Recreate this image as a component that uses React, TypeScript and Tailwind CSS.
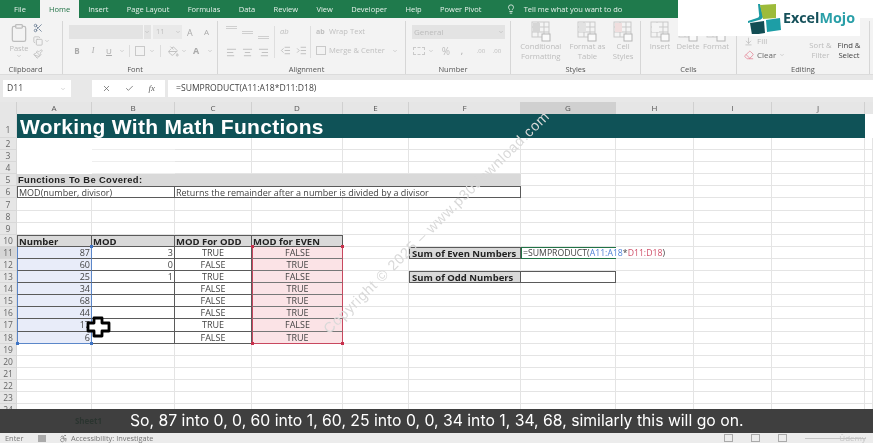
import type { ReactNode } from "react"
import {
  Accessibility,
  AlignCenter,
  AlignLeft,
  AlignRight,
  ArrowDownToLine,
  Check,
  ChevronDown,
  Clipboard,
  Copy,
  Eraser,
  Indent,
  Lightbulb,
  Outdent,
  PaintBucket,
  Paintbrush,
  Scissors,
  X,
} from "lucide-react"

const TABS = ["Insert", "Page Layout", "Formulas", "Data", "Review", "View", "Developer", "Help", "Power Pivot"]
const COLS = ["A", "B", "C", "D", "E", "F", "G", "H", "I", "J"]
const DATA: [number, string, string, string][] = [
  [87, "3", "TRUE", "FALSE"],
  [60, "0", "FALSE", "TRUE"],
  [25, "1", "TRUE", "FALSE"],
  [34, "", "FALSE", "TRUE"],
  [68, "", "FALSE", "TRUE"],
  [44, "", "FALSE", "TRUE"],
  [17, "", "TRUE", "FALSE"],
  [6, "", "FALSE", "TRUE"],
]

const GRID = "border-r border-b border-[#e4e4e4]"
const DARK = "border-r border-b border-[#5a5a5a]"

function Blank({ count }: { count: number }) {
  return (
    <>
      {Array.from({ length: count }, (_, i) => (
        <div key={i} className={GRID} />
      ))}
    </>
  )
}

function Caret() {
  return <ChevronDown size={6} strokeWidth={2} className="text-[#b0b0b0]" />
}

function Handle({ className }: { className: string }) {
  return <span className={`absolute h-[3px] w-[3px] ${className}`} />
}

function TableIcon({ accent }: { accent: string }) {
  return (
    <svg width="20" height="21" viewBox="0 0 20 21" fill="none" stroke="#c9c9c9" strokeWidth="1">
      <rect x="1" y="1" width="17" height="15" fill="#f4f4f4" />
      <path d="M1 6h17M1 11h17M7 1v15M13 1v15" />
      <rect x="2" y="2" width="7" height="9" fill={accent} stroke="none" />
      <rect x="11" y="13" width="8" height="7" fill="#fafafa" stroke="#b5b5b5" />
    </svg>
  )
}

function BigButton({ lines, accent, width }: { lines: string[]; accent: string; width: string }) {
  return (
    <div className={`flex flex-col items-center text-[7.7px] leading-[9.5px] text-[#bcbcbc] ${width}`}>
      <div className="h-[21px]">
        <TableIcon accent={accent} />
      </div>
      {lines.map((l) => (
        <span key={l} className="whitespace-nowrap">
          {l}
        </span>
      ))}
    </div>
  )
}

function Group({ label, width, pad, children }: { label: string; width: string; pad?: string; children: ReactNode }) {
  return (
    <div className={`flex shrink-0 flex-col border-r border-[#d6d6d6] ${width}`}>
      <div className="h-[44px] overflow-hidden">{children}</div>
      <div className={`text-center text-[7.5px] leading-[9px] text-[#555] ${pad ?? ""}`}>{label}</div>
    </div>
  )
}

function Ribbon() {
  const ico = "text-[#bdbdbd]"
  return (
    <div className="flex h-[56px] bg-[#f3f3f3] pt-[3px]">
      <Group label="Clipboard" width="w-[63px]" pad="pr-[11px]">
        <div className="flex gap-[4px] pl-[9px] pt-[2px]">
          <div className="flex flex-col items-center text-[7.5px] text-[#bcbcbc]">
            <Clipboard size={20} strokeWidth={1.5} className={ico} />
            <span className="mt-[1px] leading-[9px]">Paste</span>
            <Caret />
          </div>
          <div className="flex flex-col gap-[3px]">
            <Scissors size={10} className="text-[#6d7f95]" />
            <div className="flex items-center gap-[1px]">
              <Copy size={10} className={ico} />
              <Caret />
            </div>
            <Paintbrush size={10} className={ico} />
          </div>
        </div>
      </Group>
      <Group label="Font" width="w-[155px]" pad="pr-[10px]">
        <div className="flex flex-col gap-[5px] pl-[6px] pt-[4px]">
          <div className="flex items-center">
            <div className="flex h-[14px] w-[82px] justify-end bg-[#e3e3e3]">
              <div className="flex w-[8px] items-center border-l border-[#f5f5f5]">
                <Caret />
              </div>
            </div>
            <div className="ml-[2px] flex h-[14px] w-[29px] items-center justify-between bg-[#e9e9e9] pl-[3px] pr-[1px] text-[7.5px] text-[#c0c0c0]">
              11
              <Caret />
            </div>
            <span className="ml-[5px] w-[17px] text-[9px] leading-none text-[#aaa]">A</span>
            <span className="text-[8px] leading-none text-[#aaa]">A</span>
          </div>
          <div className="flex items-center text-center text-[8px] leading-[14px] text-[#aaa]">
            <b className="w-[16px]">B</b>
            <i className="w-[16px] font-['Liberation_Serif',serif]">I</i>
            <u className="w-[16px]">U</u>
            <div className="flex w-[10px] justify-center">
              <Caret />
            </div>
            <div className="flex w-[4px] justify-center">
              <div className="h-[12px] w-px bg-[#dcdcdc]" />
            </div>
            <div className="flex w-[18px] justify-center">
              <div className="h-[10px] w-[10px] border border-[#c9c9c9]" />
            </div>
            <div className="flex w-[6px] justify-center">
              <Caret />
            </div>
            <div className="flex w-[10px] justify-center">
              <div className="h-[12px] w-px bg-[#dcdcdc]" />
            </div>
            <div className="flex w-[16px] justify-center">
              <PaintBucket size={11} className={ico} />
            </div>
            <div className="flex w-[6px] justify-center">
              <Caret />
            </div>
            <b className="w-[18px] text-[9px]">A</b>
            <div className="flex w-[10px] justify-center">
              <Caret />
            </div>
          </div>
        </div>
      </Group>
      <Group label="Alignment" width="w-[188px]" pad="pr-[10px]">
        <div className="flex pl-[8px] pt-[5px] text-[7.6px] text-[#c0c0c0]">
          <div className="grid w-[49px] grid-cols-3 gap-x-[5px] gap-y-[8px] border-r border-[#dedede] pr-[5px]">
            <div className="mb-[5px] h-[3px] self-start border-y border-[#cfcfcf]" />
            <div className="my-[5px] h-[3px] self-center border-y border-[#cfcfcf]" />
            <div className="mt-[8px] h-[3px] self-end border-y border-[#cfcfcf]" />
            <AlignLeft size={11} className={ico} />
            <AlignCenter size={11} className={ico} />
            <AlignRight size={11} className={ico} />
          </div>
          <div className="flex w-[36px] flex-col gap-[8px] border-r border-[#dedede] pl-[5px]">
            <span className="h-[11px] leading-[11px] italic">ab</span>
            <div className="flex gap-[5px]">
              <Outdent size={11} className={ico} />
              <Indent size={11} className={ico} />
            </div>
          </div>
          <div className="flex flex-col gap-[8px] pl-[5px] leading-[11px]">
            <div className="flex items-center gap-[3px]">
              <span className="w-[10px] text-[7px] font-bold">ab</span>
              Wrap Text
            </div>
            <div className="flex items-center gap-[3px]">
              <div className="h-[9px] w-[10px] border border-[#c9c9c9]" />
              Merge &amp; Center
              <span className="ml-[4px]">
                <Caret />
              </span>
            </div>
          </div>
        </div>
      </Group>
      <Group label="Number" width="w-[105px]" pad="pr-[10px]">
        <div className="flex flex-col gap-[6px] pl-[6px] pt-[4px] text-[8px] text-[#bcbcbc]">
          <div className="flex h-[14px] w-[93px] items-center justify-between bg-[#e3e3e3] pl-[2px] pr-[1px]">
            General
            <Caret />
          </div>
          <div className="flex items-center pl-[1px] text-center leading-[12px]">
            <div className="h-[8px] w-[12px] border border-dashed border-[#c9c9c9]" />
            <div className="flex w-[12px] justify-center">
              <Caret />
            </div>
            <span className="w-[18px] text-[10px]">%</span>
            <span className="w-[14px] font-bold">,</span>
            <span className="ml-[4px] w-[16px] text-[6px]">.00</span>
            <span className="w-[16px] text-[6px]">.00</span>
          </div>
        </div>
      </Group>
      <Group label="Styles" width="w-[130px]">
        <div className="flex pl-[2px]">
          <BigButton lines={["Conditional", "Formatting"]} accent="#d6d6d6" width="w-[56px]" />
          <BigButton lines={["Format as", "Table"]} accent="#e2e2e2" width="w-[38px]" />
          <BigButton lines={["Cell", "Styles"]} accent="#f0dede" width="w-[34px]" />
        </div>
      </Group>
      <Group label="Cells" width="w-[96px]">
        <div className="flex pl-[5px]">
          <BigButton lines={["Insert"]} accent="#f4f4f4" width="w-[28px]" />
          <BigButton lines={["Delete"]} accent="#f4f4f4" width="w-[28px]" />
          <BigButton lines={["Format"]} accent="#f4f4f4" width="w-[28px]" />
        </div>
      </Group>
      <Group label="Editing" width="w-[133px]">
        <div className="flex pl-[7px] pt-[15px]">
          <div className="flex w-[63px] flex-col gap-[4px] text-[8px] leading-[10px]">
            <div className="flex items-center gap-[4px] text-[#bcbcbc]">
              <ArrowDownToLine size={9} />
              Fill
            </div>
            <div className="flex items-center gap-[3px] text-[#666]">
              <Eraser size={10} className="text-[#e58a9a]" />
              Clear
              <Caret />
            </div>
          </div>
          <div className="flex w-[27px] flex-col items-center pt-[5px] text-[7.7px] leading-[9.5px] text-[#bcbcbc]">
            <span>Sort &amp;</span>
            <span>Filter</span>
          </div>
          <div className="flex w-[30px] flex-col items-center pt-[5px] text-[7.7px] leading-[9.5px] text-[#444]">
            <span>Find &amp;</span>
            <span>Select</span>
          </div>
        </div>
      </Group>
    </div>
  )
}

function Logo() {
  return (
    <div className="absolute left-[678px] top-0 flex h-[36px] w-[182px] items-center bg-white pl-[69px]">
      <svg width="36" height="32" viewBox="0 0 36 32" className="shrink-0">
        <path d="M13 2 L16 14 Q16 17 12 18 L1 21 L1 19 L10 16 Q13 15 12 12 L11 2 Z" fill="#1c9aa3" />
        <path d="M13 3 L29 2 L29 16 L16 17 Z" fill="#9dbb3a" />
        <path d="M3 21 L17 19 L18 31 L5 33 Z" fill="#124d54" />
        <path d="M19 18 L33 16 L34 28 L20 30 Z" fill="#1d9ea6" />
      </svg>
      <span className="font-['Open_Sans',sans-serif] text-[14.3px] font-bold leading-none text-[#15505a]">
        Excel<span className="text-[#2a9fa8]">Mojo</span>
      </span>
    </div>
  )
}

function Sheet() {
  const head = `${DARK} border-t bg-[#d9d9d9] pl-[1px] text-[9.5px] font-bold whitespace-nowrap text-[#222]`
  const sumLabel = `${DARK} border-l border-t bg-[#d9d9d9] pl-[2px] text-[9.5px] font-bold whitespace-nowrap text-[#222]`
  return (
    <div className="relative h-[295px] overflow-hidden bg-white">
      <div className="grid grid-cols-[17px_75px_83px_77px_91px_66px_112px_95px_78px_78px_93px_8px] grid-rows-[24px_repeat(24,12.1px)] text-[9px] leading-[11px] text-[#444]">
        {Array.from({ length: 24 }, (_, i) => {
          const n = i + 1
          return (
            <div key={n} className="contents">
              <div
                className={`flex items-center justify-center border-b border-r border-[#d8d8d8] text-[8.5px] text-[#666] ${
                  n === 11 ? "bg-[#d6d6d6]" : "bg-[#e6e6e6]"
                } ${n === 1 ? "pt-[8px]" : ""}`}
              >
                {n}
              </div>
              {n === 1 && (
                <>
                  <div className="col-span-10 flex items-center bg-[#0f5257] pl-[3px] font-['Liberation_Sans',sans-serif] text-[21px] font-bold tracking-[0.3px] text-white">
                    Working With Math Functions
                  </div>
                  <div />
                </>
              )}
              {n >= 2 && n <= 4 && (
                <>
                  <div />
                  <div className="border-b border-[#eeeeee]" />
                  <Blank count={9} />
                </>
              )}
              {n === 5 && (
                <>
                  <div className="col-span-6 bg-[#d9d9d9] pl-[1px] font-['Liberation_Sans',sans-serif] text-[9.4px] font-bold tracking-[0.35px] text-[#222]">
                    Functions To Be Covered:
                  </div>
                  <Blank count={5} />
                </>
              )}
              {n === 6 && (
                <>
                  <div className={`col-span-2 border-l border-t pl-[1px] ${DARK}`}>MOD(number, divisor)</div>
                  <div className={`col-span-4 border-t pl-[1px] ${DARK}`}>
                    Returns the remainder after a number is divided by a divisor
                  </div>
                  <Blank count={5} />
                </>
              )}
              {(n === 7 || n === 8 || n === 9 || n >= 19) && <Blank count={11} />}
              {n === 10 && (
                <>
                  <div className={`${head} border-l`}>Number</div>
                  <div className={head}>MOD</div>
                  <div className={head}>MOD For ODD</div>
                  <div className={head}>MOD for EVEN</div>
                  <Blank count={7} />
                </>
              )}
              {n >= 11 && n <= 18 && (
                <>
                  <div
                    className={`relative border-x border-b border-x-[#5b87c9] bg-[#e8ecf9] pr-[1px] text-right ${
                      n === 18 ? "border-b-[#5b87c9]" : "border-b-[#5a5a5a]"
                    }`}
                  >
                    {DATA[n - 11][0]}
                    {n === 11 && <Handle className="-right-[2px] -top-[2px] bg-[#3f74c4]" />}
                    {n === 18 && (
                      <>
                        <Handle className="-bottom-[2px] -left-[2px] bg-[#3f74c4]" />
                        <Handle className="-bottom-[2px] -right-[2px] bg-[#3f74c4]" />
                      </>
                    )}
                  </div>
                  <div className={`pr-[1px] text-right ${DARK}`}>{DATA[n - 11][1]}</div>
                  <div className={`text-center ${DARK}`}>{DATA[n - 11][2]}</div>
                  <div
                    className={`relative border-x border-b border-x-[#c8485f] bg-[#fbe3e6] text-center ${
                      n === 18 ? "border-b-[#c8485f]" : "border-b-[#777]"
                    }`}
                  >
                    {DATA[n - 11][3]}
                    {n === 11 && (
                      <>
                        <Handle className="-left-[2px] -top-[2px] bg-[#c8304c]" />
                        <Handle className="-right-[2px] -top-[2px] bg-[#c8304c]" />
                      </>
                    )}
                    {n === 18 && (
                      <>
                        <Handle className="-bottom-[2px] -left-[2px] bg-[#c8304c]" />
                        <Handle className="-bottom-[2px] -right-[2px] bg-[#c8304c]" />
                      </>
                    )}
                  </div>
                  <div className={GRID} />
                  {n === 11 ? (
                    <>
                      <div className={sumLabel}>Sum of Even Numbers</div>
                      <div className="relative z-10 whitespace-nowrap border-y border-l border-[#217346] pl-[1px] text-[8.7px] text-[#444]">
                        =SUMPRODUCT(<span className="text-[#4f81d6]">A11:A18</span>*
                        <span className="text-[#d0506a]">D11:D18</span>)
                      </div>
                    </>
                  ) : n === 13 ? (
                    <>
                      <div className={sumLabel}>Sum of Odd Numbers</div>
                      <div className={`${DARK} border-t`} />
                    </>
                  ) : (
                    <Blank count={2} />
                  )}
                  <Blank count={4} />
                </>
              )}
            </div>
          )
        })}
      </div>

      {/* watermark lies on top of the cells */}
      <div className="absolute left-[282px] top-[98px] origin-center -rotate-[44.5deg] whitespace-nowrap font-['Liberation_Sans',sans-serif] text-[14.5px] tracking-[0.75px] text-[#d9d9d9]">
        Copyright © 2025 – www.p30download.com
      </div>

      <svg width="25" height="22" viewBox="0 0 25 22" className="absolute left-[86px] top-[202px]">
        <path
          d="M8 2 H16 V7 H23 V15 H16 V20 H8 V15 H2 V7 H8 Z"
          fill="#fff"
          stroke="#000"
          strokeWidth="2.8"
          strokeLinejoin="round"
        />
      </svg>
    </div>
  )
}

export default function App() {
  return (
    <div className="relative h-[443px] w-[873px] overflow-hidden bg-white font-['Open_Sans',sans-serif] blur-[0.4px]">
      {/* title tabs */}
      <div className="flex h-[18px]">
        <div className="flex w-[678px] items-end bg-[#1f7a4c] text-[7.5px] leading-[18px] text-[#e6f1ea]">
          <div className="w-[40px] text-center">File</div>
          <div className="w-[39px] bg-[#f3f3f3] text-center text-[#217346]">Home</div>
          <div className="flex">
            {TABS.map((t) => (
              <div key={t} className="whitespace-nowrap px-[9.2px]">
                {t}
              </div>
            ))}
          </div>
          <Lightbulb size={10} className="mb-[4px] ml-[15px] mr-[8px]" />
          <span className="whitespace-nowrap">Tell me what you want to do</span>
        </div>
      </div>
      <Ribbon />
      <Logo />

      {/* formula bar */}
      <div className="flex h-[28px] flex-col border-t border-[#dcdcdc] bg-[#e8e8e8] pt-[5px]">
        <div className="flex h-[17px] text-[8.6px] leading-[17px] text-[#444]">
          <div className="ml-[3px] flex w-[68px] items-center justify-between bg-white pl-[4px] pr-[5px]">
            D11
            <Caret />
          </div>
          <div className="ml-[21px] flex w-[73px] items-center justify-around bg-white px-[3px] text-[#666]">
            <X size={9} />
            <Check size={9} />
            <i className="font-['Liberation_Serif',serif] text-[9px]">fx</i>
          </div>
          <div className="ml-[3px] flex-1 bg-white pl-[8px]">=SUMPRODUCT(A11:A18*D11:D18)</div>
        </div>
      </div>

      {/* column letters */}
      <div className="grid h-[12px] grid-cols-[17px_75px_83px_77px_91px_66px_112px_95px_78px_78px_93px_8px] bg-[#e6e6e6] text-center text-[8px] leading-[12px] text-[#555]">
        <div className="border-r border-[#d0d0d0]" />
        {COLS.map((c) => (
          <div
            key={c}
            className={`border-r border-[#d0d0d0] ${c === "G" ? "border-b border-b-[#217346] bg-[#d0d0d0]" : ""}`}
          >
            {c}
          </div>
        ))}
        <div />
      </div>

      <Sheet />

      {/* sheet tabs, under the caption */}
      <div className="flex h-[24px] bg-[#e6e6e6] pl-[67px]">
        <div className="w-[43px] text-center text-[8px] font-bold leading-[24px] text-[#1f7a4c]">Sheet1</div>
      </div>

      {/* status bar */}
      <div className="flex h-[10px] items-center bg-[#ececec] pl-[5px] text-[7.4px] leading-[10px] text-[#777]">
        <span className="w-[33px]">Enter</span>
        <div className="h-[7px] w-[8px] bg-[#aaa]" />
        <Accessibility size={9} className="ml-[13px] mr-[3px]" />
        <span className="whitespace-nowrap">Accessibility: Investigate</span>
        <div className="ml-auto flex items-center gap-[18px] pr-[7px]">
          <div className="h-[8px] w-[9px] border border-[#aaa]" />
          <div className="h-[8px] w-[9px] border border-[#aaa]" />
          <div className="h-[8px] w-[9px] border border-[#aaa]" />
          <div className="relative flex h-[10px] w-[61px] items-center justify-end border-[#c4c4c4]">
            <div className="h-px w-full bg-[#c4c4c4]" />
            <span className="absolute right-0 text-[8px] text-[#c4c4c4]">Ûdemy</span>
          </div>
        </div>
      </div>

      {/* caption over the sheet tabs */}
      <div className="absolute bottom-[10px] left-0 flex h-[24px] w-full items-center bg-[#2c2c2c]/90 pl-[130px] font-['Inter',sans-serif] text-[15.75px] text-white">
        So, 87 into 0, 0, 60 into 1, 60, 25 into 0, 0, 34 into 1, 34, 68, similarly this will go on.
      </div>
    </div>
  )
}
